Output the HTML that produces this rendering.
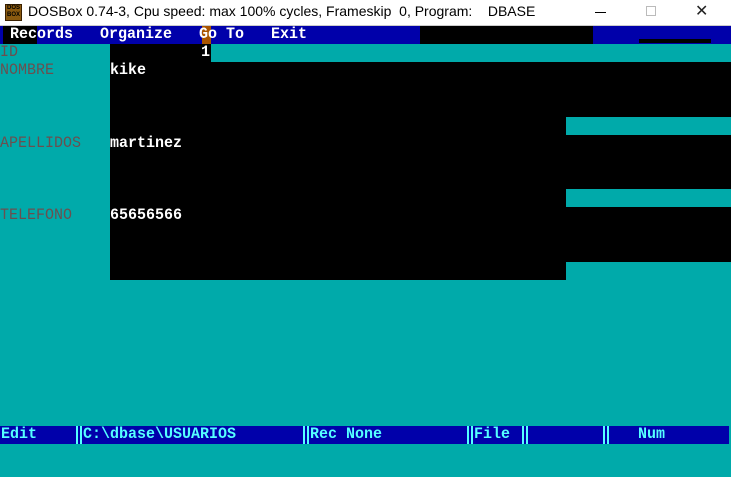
<!DOCTYPE html><html><head><style>
*{margin:0;padding:0;box-sizing:border-box}
body{width:731px;height:477px;overflow:hidden;background:#00aaaa;position:relative;font-family:"Liberation Mono",monospace;}
.a{position:absolute}
.t{position:absolute;font-size:15px;line-height:18px;white-space:pre;font-weight:bold;transform:scaleY(1.05)}
.lab{color:#6a5050;font-weight:normal}
.sep{position:absolute;top:426px;height:18px;width:6px;border-left:2px solid #55ffff;border-right:2px solid #55ffff}
</style></head><body>
<div class="a" style="left:0;top:0;width:731px;height:26px;background:#fff;border-bottom:1px solid #ccc"></div>
<div class="a" style="left:5px;top:4px;width:17px;height:17px;background:#8a5a10;border:1px solid #3a2000"></div>
<div class="a" style="left:7px;top:5px;font:bold 6px 'Liberation Sans',sans-serif;color:#000;line-height:7px">DOS<br>BOX</div>
<div class="a" style="left:28px;top:3px;font:14px 'Liberation Sans',sans-serif;color:#000;white-space:pre">DOSBox 0.74-3, Cpu speed: max 100% cycles, Frameskip  0, Program:    DBASE</div>
<div class="a" style="left:595px;top:12px;width:11px;height:1px;background:#000"></div>
<div class="a" style="left:646px;top:6px;width:10px;height:10px;border:1px solid #bbb"></div>
<div class="a" style="left:695px;top:1px;font:16px 'Liberation Sans',sans-serif;color:#222">✕</div>
<!-- menu -->
<div class="a" style="left:0;top:26px;width:731px;height:18px;background:#0000aa"></div>
<div class="a" style="left:420px;top:26px;width:173px;height:18px;background:#000"></div>
<div class="a" style="left:639px;top:39px;width:72px;height:4px;background:#000"></div>
<div class="a" style="left:3px;top:26px;width:34px;height:18px;background:#000"></div>
<div class="a" style="left:202px;top:26px;width:9px;height:18px;background:#aa5500"></div>
<div class="t" style="left:10px;top:26px;color:#fff">Records   Organize   Go To   Exit</div>
<!-- black data area -->
<div class="a" style="left:110px;top:44px;width:101px;height:18px;background:#000"></div>
<div class="a" style="left:110px;top:62px;width:621px;height:218px;background:#000"></div>
<div class="a" style="left:566px;top:117px;width:165px;height:18px;background:#00aaaa"></div>
<div class="a" style="left:566px;top:189px;width:165px;height:18px;background:#00aaaa"></div>
<div class="a" style="left:566px;top:262px;width:165px;height:18px;background:#00aaaa"></div>
<div class="t lab" style="left:0;top:44px">ID</div>
<div class="t" style="left:201px;top:44px;color:#fff">1</div>
<div class="t lab" style="left:0;top:62px">NOMBRE</div>
<div class="t" style="left:110px;top:62px;color:#fff">kike</div>
<div class="t lab" style="left:0;top:135px">APELLIDOS</div>
<div class="t" style="left:110px;top:135px;color:#fff">martinez</div>
<div class="t lab" style="left:0;top:207px">TELEFONO</div>
<div class="t" style="left:110px;top:207px;color:#fff">65656566</div>
<!-- status -->
<div class="a" style="left:0;top:426px;width:729px;height:18px;background:#0000aa"></div>
<div class="sep" style="left:76px"></div>
<div class="sep" style="left:303px"></div>
<div class="sep" style="left:467px"></div>
<div class="sep" style="left:522px"></div>
<div class="sep" style="left:603px"></div>
<div class="t" style="left:1px;top:426px;color:#55ffff">Edit</div>
<div class="t" style="left:83px;top:426px;color:#55ffff">C:\dbase\USUARIOS</div>
<div class="t" style="left:310px;top:426px;color:#55ffff">Rec None</div>
<div class="t" style="left:474px;top:426px;color:#55ffff">File</div>
<div class="t" style="left:638px;top:426px;color:#55ffff">Num</div>
</body></html>
